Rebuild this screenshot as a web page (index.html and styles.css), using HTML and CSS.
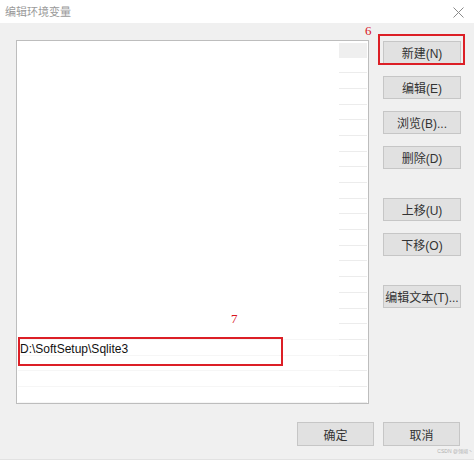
FILE: index.html
```html
<!DOCTYPE html>
<html lang="zh">
<head>
<meta charset="utf-8">
<title>编辑环境变量</title>
<link rel="stylesheet" href="styles.css">
</head>
<body>
<div class="window">
  <div class="titlebar">
    <span class="title">编辑环境变量</span>
    <svg class="close" width="11" height="11" viewBox="0 0 11 11"><path d="M0.5 0.5 L10.5 10.5 M10.5 0.5 L0.5 10.5" stroke="#8a8a8a" stroke-width="1" fill="none"/></svg>
  </div>
  <div class="content">
    <div class="list">
      <div class="row head"><span class="text"></span><span class="cell"></span></div>
      <div class="row"><span class="text"></span><span class="cell"></span></div>
      <div class="row"><span class="text"></span><span class="cell"></span></div>
      <div class="row"><span class="text"></span><span class="cell"></span></div>
      <div class="row"><span class="text"></span><span class="cell"></span></div>
      <div class="row"><span class="text"></span><span class="cell"></span></div>
      <div class="row"><span class="text"></span><span class="cell"></span></div>
      <div class="row"><span class="text"></span><span class="cell"></span></div>
      <div class="row"><span class="text"></span><span class="cell"></span></div>
      <div class="row"><span class="text"></span><span class="cell"></span></div>
      <div class="row"><span class="text"></span><span class="cell"></span></div>
      <div class="row"><span class="text"></span><span class="cell"></span></div>
      <div class="row"><span class="text"></span><span class="cell"></span></div>
      <div class="row"><span class="text"></span><span class="cell"></span></div>
      <div class="row"><span class="text"></span><span class="cell"></span></div>
      <div class="row"><span class="text"></span><span class="cell"></span></div>
      <div class="row"><span class="text"></span><span class="cell"></span></div>
      <div class="row"><span class="text"></span><span class="cell"></span></div>
      <div class="row wide"><span class="text"></span><span class="cell"></span></div>
      <div class="row wide"><span class="text">D:\SoftSetup\Sqlite3</span><span class="cell"></span></div>
      <div class="row wide"><span class="text"></span><span class="cell"></span></div>
      <div class="row wide"><span class="text"></span><span class="cell"></span></div>
      <div class="row wide"><span class="text"></span><span class="cell"></span></div>
    </div>
    <div class="side">
      <div class="group">
        <button class="btn">新建(N)</button>
        <button class="btn">编辑(E)</button>
        <button class="btn">浏览(B)...</button>
        <button class="btn">删除(D)</button>
      </div>
      <div class="group">
        <button class="btn">上移(U)</button>
        <button class="btn">下移(O)</button>
      </div>
      <div class="group">
        <button class="btn">编辑文本(T)...</button>
      </div>
    </div>
  </div>
  <div class="footer">
    <button class="btn wide-btn">确定</button>
    <button class="btn wide-btn">取消</button>
  </div>

  <div class="mark mark-box6"></div>
  <div class="mark num num6">6</div>
  <div class="mark mark-box7"></div>
  <div class="mark num num7">7</div>
  <div class="watermark">CSDN @翎翊丶</div>
</div>
</body>
</html>
```
FILE: styles.css
```css
html, body {
  margin: 0;
  padding: 0;
  background: #f0f0f0;
}

.window {
  position: relative;
  width: 474px;
  height: 460px;
  background: #f0f0f0;
  display: flex;
  flex-direction: column;
  font-family: "Liberation Sans", "Noto Sans CJK SC", sans-serif;
  font-size: 12px;
  color: #1a1a1a;
  overflow: hidden;
  box-sizing: border-box;
  border-bottom: 1px solid #e2e2e2;
}

.titlebar {
  height: 23px;
  flex: none;
  background: #ffffff;
  display: flex;
  align-items: center;
  justify-content: space-between;
  padding: 0 10px 0 5px;
}

.title {
  font-family: "Noto Sans CJK SC", sans-serif;
  font-size: 11px;
  color: #9a9a9a;
  line-height: 23px;
}

.close {
  display: block;
  margin-top: 1px;
}

.content {
  display: flex;
  padding: 17px 0 0 16px;
}

.list {
  width: 353px;
  height: 364px;
  box-sizing: border-box;
  background: #ffffff;
  border: 1px solid #bdbdbd;
  padding: 2px 1px 0 1px;
  display: flex;
  flex-direction: column;
  overflow: hidden;
}

.row {
  height: 15.7px;
  flex: none;
  display: flex;
}

.row.head {
  height: 14.5px;
}

.row .text {
  flex: 1;
  font-family: "Liberation Sans", sans-serif;
  font-size: 12px;
  line-height: 19px;
  padding-left: 2px;
  color: #111;
  white-space: nowrap;
}

.row .cell {
  width: 28px;
  border-bottom: 1px solid #ececec;
  box-sizing: border-box;
}

.row.head .cell {
  background: #efefef;
  border-bottom: none;
}

.row.wide .text {
  border-bottom: 1px solid #f6f6f6;
}

.side {
  margin-left: 14px;
  padding-top: 1px;
  display: flex;
  flex-direction: column;
  gap: 29px;
}

.group {
  display: flex;
  flex-direction: column;
  gap: 12px;
}

.btn {
  width: 78px;
  height: 23px;
  box-sizing: border-box;
  margin: 0;
  padding: 0;
  background: #e1e1e1;
  border: 1px solid #c6c6c6;
  font-family: "Liberation Sans", "Noto Sans CJK SC", sans-serif;
  font-size: 12px;
  color: #333333;
  display: flex;
  align-items: center;
  justify-content: center;
}

.footer {
  display: flex;
  justify-content: flex-end;
  gap: 9px;
  padding: 18px 14px 0 0;
}

.wide-btn {
  width: 77px;
  height: 24px;
}

.mark {
  position: absolute;
}

.mark-box6 {
  left: 378px;
  top: 34px;
  width: 87px;
  height: 31px;
  box-sizing: border-box;
  border: 2px solid #dc1f26;
}

.mark-box7 {
  left: 18px;
  top: 337px;
  width: 265px;
  height: 29px;
  box-sizing: border-box;
  border: 2px solid #dc1f26;
}

.num {
  font-family: "Liberation Serif", "DejaVu Serif", serif;
  font-size: 13px;
  line-height: 13px;
  color: #d8141c;
}

.num6 {
  left: 365px;
  top: 24px;
}

.num7 {
  left: 231px;
  top: 312px;
}

.watermark {
  position: absolute;
  right: 1px;
  top: 448px;
  font-family: "Liberation Sans", "Noto Sans CJK SC", sans-serif;
  font-size: 5px;
  line-height: 6px;
  color: #b0b0b0;
}
```
